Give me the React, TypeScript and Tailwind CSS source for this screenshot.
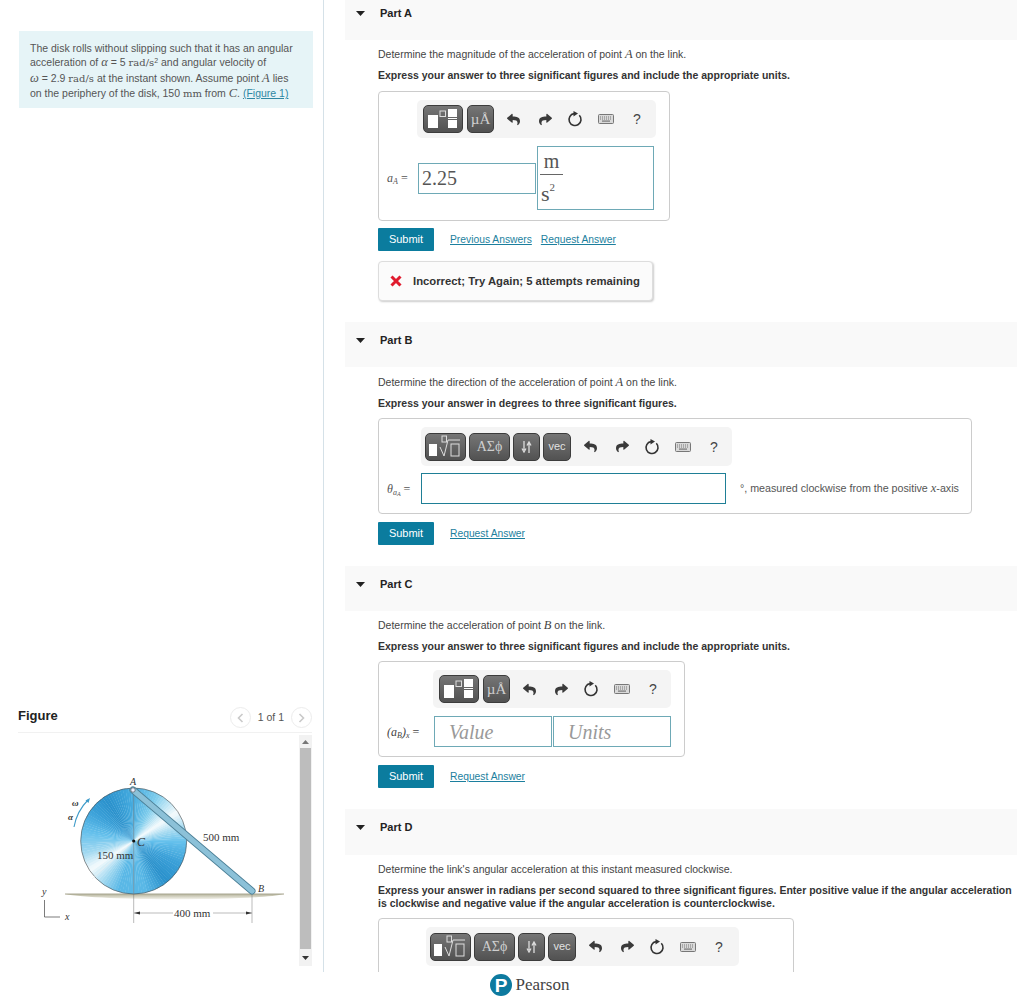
import React from "react";
import { FaReply, FaShare } from "react-icons/fa";

const serif = "font-['Liberation_Serif',serif]";
const M = ({ children }: { children: React.ReactNode }) => (
  <i className={`${serif} text-[12.5px]`}>{children}</i>
);
const R = ({ children }: { children: React.ReactNode }) => (
  <span className="font-['DejaVu_Serif',serif] text-[10px]">{children}</span>
);

function Triangle() {
  return (
    <svg width="9" height="5" viewBox="0 0 9 5" className="shrink-0">
      <path d="M0 0H9L4.5 5Z" fill="#222" />
    </svg>
  );
}

function PartHeader({ label, h, pt }: { label: string; h: string; pt: string }) {
  return (
    <div className={`${h} ${pt} bg-[#f9f9f9] flex items-start pl-[11px]`}>
      <div className="mt-[4px]">
        <Triangle />
      </div>
      <span className="ml-[15px] text-[11px] leading-[13px] font-bold text-[#222]">{label}</span>
    </div>
  );
}

function TemplateIcon() {
  return (
    <svg width="32" height="22" viewBox="0 0 32 22">
      <rect x="1" y="7" width="10" height="13" fill="#fff" />
      <rect x="13" y="3" width="5.5" height="5.5" fill="none" stroke="#ddd" strokeWidth="1" />
      <rect x="21" y="1" width="9" height="8" fill="#fff" />
      <rect x="21" y="10" width="9" height="1" fill="#fff" />
      <rect x="21" y="12" width="9" height="8" fill="#fff" />
    </svg>
  );
}

function RootIcon() {
  return (
    <svg width="36" height="24" viewBox="0 0 36 24">
      <rect x="1" y="9" width="8" height="12" fill="#fff" />
      <rect x="14" y="1" width="4.5" height="6" fill="none" stroke="#ddd" strokeWidth="1" />
      <path d="M12 12 L16 21 L20 5 H32" fill="none" stroke="#ddd" strokeWidth="1" />
      <rect x="23" y="9" width="8" height="12" fill="none" stroke="#ddd" strokeWidth="1" />
    </svg>
  );
}

function DarkBtn({ w, children }: { w: string; children: React.ReactNode }) {
  return (
    <div
      className={`${w} h-[28px] rounded-[5px] border border-[#3c3c3c] bg-gradient-to-b from-[#767676] to-[#525252] flex items-center justify-center text-[#cfcfcf] shrink-0`}
    >
      {children}
    </div>
  );
}

function Tools() {
  return (
    <div className="flex items-center">
      <FaReply className="w-[13px] h-[13px] text-[#3a3a3a]" />
      <FaShare className="ml-[19px] w-[13px] h-[13px] text-[#3a3a3a]" />
      <svg width="16" height="16" viewBox="0 0 16 16" className="ml-[15px]">
        <path d="M7 3.1 A6 6 0 1 0 12.3 4.8" transform="translate(0 -0.5)" fill="none" stroke="#333" strokeWidth="1.6" />
        <path d="M6.5 0L6.5 5.6L11 2.6Z" fill="#333" />
      </svg>
      <svg width="16" height="10" viewBox="0 0 16 10" className="ml-[15px]">
        <rect x="0.5" y="0.5" width="15" height="9" rx="1" fill="#d9d9d9" stroke="#777" />
        <path d="M2 3H14M2 5H14" stroke="#777" strokeWidth="1" strokeDasharray="1 1" />
        <rect x="4" y="6.5" width="8" height="1.2" fill="#777" />
      </svg>
      <span className="ml-[19px] text-[14px] text-[#444] leading-none">?</span>
    </div>
  );
}

function UnitsToolbar({ w }: { w: string }) {
  return (
    <div className={`${w} h-[38px] bg-[#f4f4f4] rounded-[5px] flex items-center pl-[6px] gap-[4px]`}>
      <DarkBtn w="w-[40px]">
        <TemplateIcon />
      </DarkBtn>
      <DarkBtn w="w-[27px]">
        <span className={`${serif} text-[15px] leading-none`}>µÅ</span>
      </DarkBtn>
      <div className="ml-[9px]">
        <Tools />
      </div>
    </div>
  );
}

function MathToolbar({ w }: { w: string }) {
  return (
    <div className={`${w} h-[39px] bg-[#f4f4f4] rounded-[5px] flex items-center pl-[4px] gap-[3px]`}>
      <DarkBtn w="w-[41px]">
        <RootIcon />
      </DarkBtn>
      <DarkBtn w="w-[41px]">
        <span className={`${serif} text-[14px] leading-none`}>ΑΣϕ</span>
      </DarkBtn>
      <DarkBtn w="w-[27px]">
        <svg width="11" height="12" viewBox="0 0 11 12">
          <path d="M3 0V9M1 7.5L3 11L5 7.5M8 12V3M6 4.5L8 1L10 4.5" fill="none" stroke="#ddd" strokeWidth="1.3" />
        </svg>
      </DarkBtn>
      <DarkBtn w="w-[28px]">
        <span className="text-[11px] leading-none text-[#e2e2e2]">vec</span>
      </DarkBtn>
      <div className="ml-[10px]">
        <Tools />
      </div>
    </div>
  );
}

function Actions({ prev, mt }: { prev?: boolean; mt: string }) {
  const link = "text-[10.3px] text-[#1c7f9e] underline";
  return (
    <div className={`${mt} flex items-center`}>
      <div className="w-[56px] h-[23px] bg-[#0b7c9e] rounded-[1px] flex items-center justify-center text-white text-[11px]">
        Submit
      </div>
      <span className={`${link} ml-[16px]`}>{prev ? "Previous Answers" : "Request Answer"}</span>
      {prev && <span className={`${link} ml-[9px]`}>Request Answer</span>}
    </div>
  );
}

function Desc({ children, mt }: { children: React.ReactNode; mt: string }) {
  return <p className={`${mt} text-[10.5px] leading-[14px] text-[#444]`}>{children}</p>;
}
function Bold({ children, mt }: { children: React.ReactNode; mt: string }) {
  return <p className={`${mt} text-[10.5px] leading-[13px] font-bold text-[#333]`}>{children}</p>;
}

const inputBorder = "border border-[#6ea9b6]";

function sector(cx: number, cy: number, r: number, a: number, b: number) {
  const p = (t: number) => `${cx + r * Math.cos(t)} ${cy + r * Math.sin(t)}`;
  return `M${cx} ${cy}L${p(a)}A${r} ${r} 0 0 1 ${p(b)}Z`;
}

function diskColor(deg: number) {
  const stops: [number, number[]][] = [
    [0, [100, 192, 236]],
    [25, [58, 160, 216]],
    [50, [42, 145, 204]],
    [75, [90, 184, 230]],
    [105, [90, 184, 230]],
    [125, [160, 216, 240]],
    [145, [245, 251, 253]],
    [165, [160, 216, 240]],
    [190, [100, 192, 236]],
    [215, [58, 160, 216]],
    [235, [42, 145, 204]],
    [265, [68, 170, 222]],
    [295, [125, 204, 236]],
    [325, [245, 251, 253]],
    [345, [160, 216, 240]],
    [360, [100, 192, 236]],
  ];
  for (let i = 0; i < stops.length - 1; i++) {
    const [d0, c0] = stops[i];
    const [d1, c1] = stops[i + 1];
    if (deg >= d0 && deg <= d1) {
      const t = (deg - d0) / (d1 - d0);
      const c = c0.map((v, j) => Math.round(v + (c1[j] - v) * t));
      return `rgb(${c[0]},${c[1]},${c[2]})`;
    }
  }
  return "#64c0ec";
}

function FigureArt() {
  const cx = 115.7;
  const cy = 106;
  const r = 53;
  const wedges = [];
  for (let d = 0; d < 360; d += 3) {
    const a = (d * Math.PI) / 180;
    const b = ((d + 3.4) * Math.PI) / 180;
    wedges.push(<path key={d} d={sector(cx, cy, r, a, b)} fill={diskColor(d)} />);
  }
  const txt = { fontFamily: "'Liberation Serif', serif", fill: "#333" };
  return (
    <svg width="278" height="237" viewBox="0 0 278 237" className="shrink-0">
      <defs>
        <linearGradient id="ground" x1="0" y1="0" x2="0" y2="1">
          <stop offset="0" stopColor="#b5b39b" />
          <stop offset="1" stopColor="#f4f3ec" />
        </linearGradient>
      </defs>
      <path d="M47 159H266C240 166 80 166 47 159Z" fill="url(#ground)" />
      <path d="M47 159H266" stroke="#a9a792" strokeWidth="1" />
      {wedges}
      <circle cx={cx} cy={cy} r={r} fill="none" stroke="#4a4a4a" strokeWidth="0.6" />
      <path d={`M${cx} ${cy - r}V188`} stroke="#777" strokeWidth="0.5" />
      <path d={`M${cx} ${cy}L74 144`} stroke="#eee" strokeWidth="0.6" />
      <path d="M115 55L234 156" stroke="#4b7f96" strokeWidth="7" strokeLinecap="round" />
      <path d="M115 55L234 156" stroke="#8cc1d8" strokeWidth="5.4" strokeLinecap="round" />
      <circle cx="115" cy="55" r="2.2" fill="#eef" stroke="#444" strokeWidth="0.6" />
      <circle cx={cx} cy={cy} r="1.6" fill="#111" />
      <path d="M56 92C58 81 63 72 70 65" fill="none" stroke="#3e9bc9" strokeWidth="1.1" />
      <path d="M72 63L67.5 65.5L70.5 68Z" fill="#3e9bc9" />
      <path d="M234 160V188M116 178H234" stroke="#777" strokeWidth="0.5" />
      <path d="M116 178L122 176.5V179.5ZM234 178L228 176.5V179.5Z" fill="#333" />
      <path d="M26.5 165V182H42" fill="none" stroke="#444" strokeWidth="0.7" />
      <rect x="155" y="172" width="40" height="12" fill="#fff" />
      <text x="115" y="50" fontSize="10" fontStyle="italic" style={txt} textAnchor="middle">A</text>
      <text x="119" y="111" fontSize="12" fontStyle="italic" style={txt}>C</text>
      <text x="79" y="124" fontSize="11" style={txt}>150 mm</text>
      <text x="185" y="106" fontSize="11" style={txt}>500 mm</text>
      <text x="240" y="157" fontSize="10" fontStyle="italic" style={txt}>B</text>
      <text x="156" y="182" fontSize="11" style={txt}>400 mm</text>
      <text x="24" y="160" fontSize="10" fontStyle="italic" style={txt}>y</text>
      <text x="47" y="185" fontSize="10" fontStyle="italic" style={txt}>x</text>
      <text x="54" y="71" fontSize="9" fontStyle="italic" fontWeight="bold" style={txt}>ω</text>
      <text x="50" y="85" fontSize="9" fontStyle="italic" fontWeight="bold" style={txt}>α</text>
    </svg>
  );
}

function Scrollbar() {
  return (
    <div className="w-[13px] h-[231px] bg-[#f2f2f2] flex flex-col items-center shrink-0">
      <div className="h-[13px] flex items-center">
        <svg width="7" height="4" viewBox="0 0 7 4"><path d="M0 4L3.5 0L7 4Z" fill="#777" /></svg>
      </div>
      <div className="w-[11px] h-[201px] bg-[#bdbdbd]" />
      <div className="h-[17px] flex items-center">
        <svg width="7" height="4" viewBox="0 0 7 4"><path d="M0 0L3.5 4L7 0Z" fill="#333" /></svg>
      </div>
    </div>
  );
}

function PageBtn({ right }: { right?: boolean }) {
  return (
    <div className="w-[21px] h-[21px] rounded-full border border-[#ececec] flex items-center justify-center">
      <svg width="7" height="10" viewBox="0 0 7 10">
        <path d={right ? "M1.5 1L5.5 5L1.5 9" : "M5.5 1L1.5 5L5.5 9"} fill="none" stroke="#c9c9c9" strokeWidth="1.6" />
      </svg>
    </div>
  );
}

export default function App() {
  return (
    <div className="w-[1024px] h-[998px] bg-white flex flex-col overflow-hidden font-['Liberation_Sans',Arial,sans-serif]">
      <main className="h-[972px] flex overflow-hidden shrink-0">
        <aside className="w-[324px] h-full border-r border-[#d5e1e8] pl-[18px] shrink-0">
          <div className="mt-[31px] ml-[1px] w-[294px] h-[77px] bg-[#e6f4f7] pl-[11px] pt-[10px] text-[10.5px] leading-[14.4px] text-[#555] whitespace-nowrap">
            The disk rolls without slipping such that it has an angular
            <br />
            acceleration of <M>α</M> = 5 <R>rad/s</R>
            <sup className="text-[7px]">2</sup> and angular velocity of
            <br />
            <M>ω</M> = 2.9 <R>rad/s</R> at the instant shown. Assume point <M>A</M> lies
            <br />
            on the periphery of the disk, 150 <R>mm</R> from <M>C</M>. <span className="text-[#2f87a3] underline">(Figure 1)</span>
          </div>
          <div className="mt-[596px] w-[294px] h-[29px] border-b border-[#f1f1f1] flex items-start justify-between">
            <span className="mt-[4px] text-[13px] font-bold text-[#222] leading-[15px]">Figure</span>
            <div className="mt-[3px] flex items-center gap-[7px]">
              <PageBtn />
              <span className="text-[10.5px] text-[#555]">1 of 1</span>
              <PageBtn right />
            </div>
          </div>
          <div className="flex items-start mt-[2px] w-[294px]">
            <FigureArt />
            <div className="ml-[3px]">
              <Scrollbar />
            </div>
          </div>
        </aside>
        <section className="flex-1 pl-[21px] pr-[7px] overflow-hidden">
          <PartHeader label="Part A" h="h-[40px]" pt="pt-[7px]" />
          <div className="pl-[33px]">
            <Desc mt="mt-[7px]">Determine the magnitude of the acceleration of point <M>A</M> on the link.</Desc>
            <Bold mt="mt-[8px]">Express your answer to three significant figures and include the appropriate units.</Bold>
            <div className="mt-[9px] w-[292px] h-[130px] border border-[#ccc] rounded-[4px] pl-[38px] pt-[8px]">
              <UnitsToolbar w="w-[239px]" />
              <div className="flex items-center mt-[8px] -ml-[30px]">
                <span className={`${serif} w-[31px] text-[12px] italic text-[#555]`}>
                  a<sub className="text-[8px]">A</sub> <span className="not-italic">=</span>
                </span>
                <div className={`w-[118px] h-[31px] ${inputBorder} flex items-center pl-[3px] ${serif} text-[20px] text-[#555]`}>2.25</div>
                <div className={`ml-[1px] w-[117px] h-[64px] ${inputBorder} pl-[2px] flex flex-col items-start ${serif} text-[#555]`}>
                  <div className="w-[23px] text-center text-[20px] leading-[26px] pt-[1px] h-[30px] border-b border-[#666]">m</div>
                  <div className="text-[22px] leading-[38px] pl-[1px]">s<sup className="text-[11px] -top-[10px]">2</sup></div>
                </div>
              </div>
            </div>
            <Actions prev mt="mt-[7px]" />
            <div className="mt-[10px] w-[275px] h-[40px] bg-[#fbfbfb] border border-[#ddd] rounded-[4px] shadow-[1px_1px_2px_#ccc] flex items-center pl-[11px]">
              <svg width="12" height="12" viewBox="0 0 12 12">
                <path d="M1.5 1.5L10.5 10.5M10.5 1.5L1.5 10.5" stroke="#e01b2e" strokeWidth="3" />
              </svg>
              <span className="ml-[11px] text-[11.3px] font-bold text-[#333] whitespace-nowrap">Incorrect; Try Again; 5 attempts remaining</span>
            </div>
          </div>

          <div className="mt-[21px]">
            <PartHeader label="Part B" h="h-[45px]" pt="pt-[12px]" />
          </div>
          <div className="pl-[33px]">
            <Desc mt="mt-[8px]">Determine the direction of the acceleration of point <M>A</M> on the link.</Desc>
            <Bold mt="mt-[8px]">Express your answer in degrees to three significant figures.</Bold>
            <div className="mt-[8px] w-[594px] h-[96px] border border-[#ccc] rounded-[4px] pl-[42px] pt-[8px]">
              <MathToolbar w="w-[311px]" />
              <div className="flex items-center mt-[7px] -ml-[34px]">
                <span className={`${serif} w-[34px] text-[12px] italic text-[#555]`}>
                  θ<sub className="text-[8px]">a<sub className="text-[6px]">A</sub></sub> <span className="not-italic">=</span>
                </span>
                <div className="w-[305px] h-[31px] border border-[#1f7f96]" />
                <span className="ml-[14px] text-[10.7px] text-[#555] whitespace-nowrap">°, measured clockwise from the positive <M>x</M>-axis</span>
              </div>
            </div>
            <Actions mt="mt-[8px]" />
          </div>

          <div className="mt-[21px]">
            <PartHeader label="Part C" h="h-[45px]" pt="pt-[12px]" />
          </div>
          <div className="pl-[33px]">
            <Desc mt="mt-[7px]">Determine the acceleration of point <M>B</M> on the link.</Desc>
            <Bold mt="mt-[8px]">Express your answer to three significant figures and include the appropriate units.</Bold>
            <div className="mt-[8px] w-[307px] h-[96px] border border-[#ccc] rounded-[4px] pl-[54px] pt-[8px]">
              <UnitsToolbar w="w-[238px]" />
              <div className="flex items-center mt-[8px] -ml-[46px]">
                <span className={`${serif} w-[47px] text-[12px] italic text-[#444] whitespace-nowrap`}>
                  (a<sub className="text-[8px]">B</sub>)<sub className="text-[8px]">x</sub> <span className="not-italic">=</span>
                </span>
                <div className={`w-[118px] h-[31px] ${inputBorder} flex items-center pl-[14px] ${serif} text-[20px] italic text-[#999]`}>Value</div>
                <div className={`ml-[1px] w-[118px] h-[31px] ${inputBorder} flex items-center pl-[14px] ${serif} text-[20px] italic text-[#999]`}>Units</div>
              </div>
            </div>
            <Actions mt="mt-[8px]" />
          </div>

          <div className="mt-[21px]">
            <PartHeader label="Part D" h="h-[46px]" pt="pt-[12px]" />
          </div>
          <div className="pl-[33px]">
            <Desc mt="mt-[7px]">Determine the link's angular acceleration at this instant measured clockwise.</Desc>
            <Bold mt="mt-[8px]">Express your answer in radians per second squared to three significant figures. Enter positive value if the angular acceleration is clockwise and negative value if the angular acceleration is counterclockwise.</Bold>
            <div className="mt-[8px] w-[416px] h-[100px] border border-[#ccc] rounded-[4px] pl-[47px] pt-[8px]">
              <MathToolbar w="w-[313px]" />
            </div>
          </div>
        </section>
      </main>
      <footer className="flex-1 flex items-center justify-center pl-[35px] gap-[4px]">
        <svg width="22" height="22" viewBox="0 0 22 22">
          <circle cx="11" cy="11" r="11" fill="#0d7a9f" />
          <text x="11" y="17.5" textAnchor="middle" fontSize="19" fontWeight="bold" fill="#fff" style={{ fontFamily: "'Liberation Sans', sans-serif" }}>P</text>
        </svg>
        <span className={`${serif} text-[17px] text-[#444]`}>Pearson</span>
      </footer>
    </div>
  );
}
